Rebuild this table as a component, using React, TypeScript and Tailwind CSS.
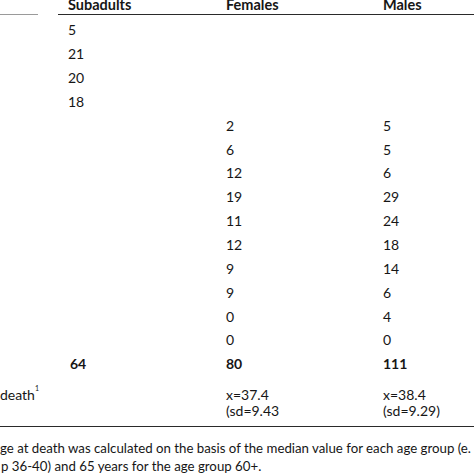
import React from "react";

const rows: [string, string, string][] = [
  ["5", "", ""],
  ["21", "", ""],
  ["20", "", ""],
  ["18", "", ""],
  ["", "2", "5"],
  ["", "6", "5"],
  ["", "12", "6"],
  ["", "19", "29"],
  ["", "11", "24"],
  ["", "12", "18"],
  ["", "9", "14"],
  ["", "9", "6"],
  ["", "0", "4"],
  ["", "0", "0"],
];

export default function App() {
  return (
    <div className="w-[474px] h-[474px] overflow-hidden bg-white text-[#161616] font-['Lato',sans-serif]">
      <div className="-mt-[2px]">
        {/* header */}
        <div className="grid grid-cols-[68px_158px_157px_1fr] h-[16px] text-[14.5px] leading-[14px] font-bold">
          <div></div>
          <div>Subadults</div>
          <div>Females</div>
          <div>Males</div>
        </div>
        <div className="flex h-px">
          <div className="w-[38px] bg-[#9a9a9a]"></div>
          <div className="w-[20px]"></div>
          <div className="flex-1 bg-[#2a2a2a]"></div>
        </div>
        {/* body */}
        <div className="mt-[3px] text-[14px]">
          {rows.map((r, i) => (
            <div key={i} className="grid grid-cols-[68px_158px_157px_1fr] h-[23.85px] items-center">
              <div></div>
              <div>{r[0]}</div>
              <div>{r[1]}</div>
              <div>{r[2]}</div>
            </div>
          ))}
          <div className="grid grid-cols-[68px_158px_157px_1fr] h-[23.85px] items-center font-bold">
            <div></div>
            <div className="pl-[2px]">64</div>
            <div>80</div>
            <div>111</div>
          </div>
          <div className="grid grid-cols-[68px_158px_157px_1fr] mt-[11px] leading-[16px]">
            <div className="col-span-2">
              death<sup className="text-[7px] align-super">1</sup>
            </div>
            <div>
              <div>x=37.4</div>
              <div>(sd=9.43</div>
            </div>
            <div>
              <div>x=38.4</div>
              <div>(sd=9.29)</div>
            </div>
          </div>
        </div>
        <div className="mt-[7px] h-[1.5px] bg-[#2a2a2a]"></div>
        <div className="mt-[12px] text-[13.25px] leading-[18px] whitespace-nowrap">
          <div>ge at death was calculated on the basis of the median value for each age group (e.</div>
          <div className="pl-[1px]">p 36-40) and 65 years for the age group 60+.</div>
        </div>
      </div>
    </div>
  );
}
